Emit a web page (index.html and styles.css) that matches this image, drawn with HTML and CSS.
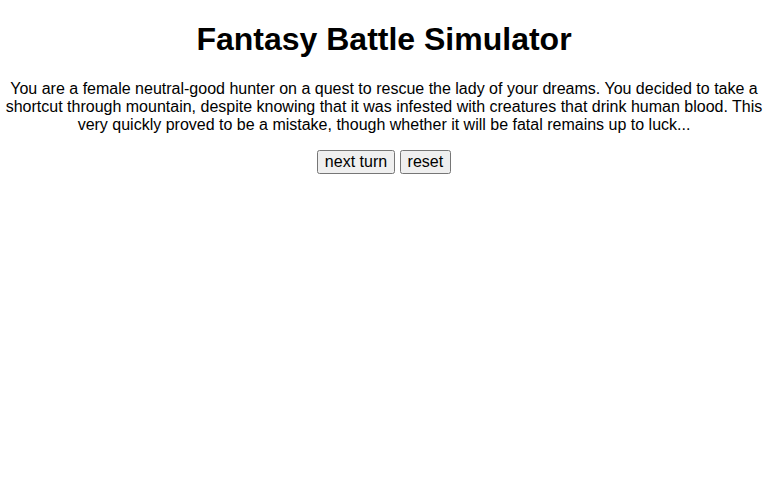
FILE: index.html
```html
<!DOCTYPE html>
<html lang="en">

<head>
    <meta charset="UTF-8">
    <meta name="viewport" content="width=device-width, initial-scale=1.0">
    <title>Fantasy Battle Simulator</title>
    <link rel="stylesheet" href="styles.css">
</head>

<body>
    <h1>Fantasy Battle Simulator</h1>

    <p id="story">You are a female neutral-good hunter on a quest to rescue the lady of your dreams. You decided to take a shortcut through mountain, despite knowing that it was infested with creatures that drink human blood. This very quickly proved to be a mistake, though whether it will be fatal remains up to luck...</p>

    <div class="controls">
        <button id="nextTurn" class="btn">next turn</button>
        <button id="reset" class="btn">reset</button>
    </div>
</body>

</html>
```

FILE: styles.css
```css
body {
    margin: 0;
    font-family: 'Liberation Sans', Arial, sans-serif;
    text-align: center;
    color: #000;
}

h1 {
    font-size: 2em;
    margin: 0.67em 0;
}

p {
    font-size: 16px;
    margin: 1em 0;
}

.btn {
    font-family: 'Liberation Sans', Arial, sans-serif;
    font-size: 16px;
}
```
